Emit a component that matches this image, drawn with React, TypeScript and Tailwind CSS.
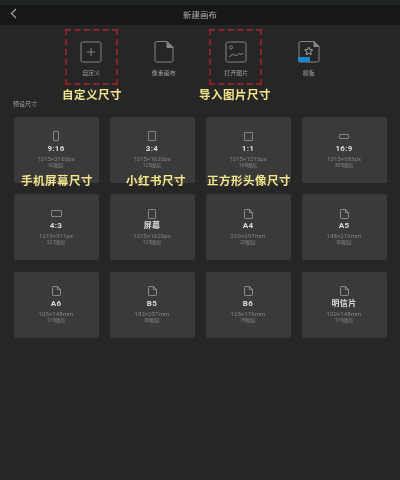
import { ReactNode } from 'react';

const FONT = "font-['Roboto','Noto_Sans_CJK_SC',sans-serif]";

type Kind = 'tall' | 'mid' | 'square' | 'wide' | 'land' | 'page';

const PRESETS: { name: string; size: string; layers: string; kind: Kind }[] = [
  { name: '9:16', size: '1215×2160px', layers: '92图层', kind: 'tall' },
  { name: '3:4', size: '1215×1620px', layers: '125图层', kind: 'mid' },
  { name: '1:1', size: '1215×1215px', layers: '169图层', kind: 'square' },
  { name: '16:9', size: '1215×683px', layers: '305图层', kind: 'wide' },
  { name: '4:3', size: '1215×911px', layers: '227图层', kind: 'land' },
  { name: '屏幕', size: '1215×1620px', layers: '125图层', kind: 'mid' },
  { name: 'A4', size: '210×297mm', layers: '23图层', kind: 'page' },
  { name: 'A5', size: '148×210mm', layers: '50图层', kind: 'page' },
  { name: 'A6', size: '105×148mm', layers: '113图层', kind: 'page' },
  { name: 'B5', size: '182×257mm', layers: '30图层', kind: 'page' },
  { name: 'B6', size: '125×176mm', layers: '78图层', kind: 'page' },
  { name: '明信片', size: '100×148mm', layers: '119图层', kind: 'page' },
];

function PresetIcon({ kind }: { kind: Kind }) {
  if (kind === 'page') {
    return (
      <svg width="9" height="10" viewBox="0 0 9 10" fill="none" stroke="#a0a0a0" strokeWidth="0.8">
        <path d="M.5 1.200A.7.7 0 0 1 1.200 .5H5.500L8.500 3.500V8.800A.7.7 0 0 1 7.800 9.500H1.200A.7.7 0 0 1 .5 8.800Z" />
        <path d="M5.500 .5V3.500H8.500" />
      </svg>
    );
  }
  const box: Record<string, string> = {
    tall: 'w-[6px] h-[10px]',
    mid: 'w-[8px] h-[10px]',
    square: 'w-[9px] h-[9px]',
    wide: 'w-[10px] h-[5px]',
    land: 'w-[11px] h-[7px]',
  };
  return <div className={`${box[kind]} border border-[#858585] rounded-[1px]`} />;
}

function PresetCard({ name, size, layers, kind }: (typeof PRESETS)[number]) {
  return (
    <div className="h-[66px] rounded-[2px] bg-[#3a3a3a] flex flex-col items-center pt-[14px]">
      <div className="h-[11px] flex items-center justify-center">
        <PresetIcon kind={kind} />
      </div>
      <div className="mt-[1px] text-[8px] leading-[12px] font-bold tracking-[0.3px] text-[#dcdcdc]">{name}</div>
      <div className="text-[6px] leading-[7px] tracking-[0.1px] text-[#858585]">{size}</div>
      <div className="text-[5px] leading-[7px] text-[#858585]">{layers}</div>
    </div>
  );
}

function Action({ label, children }: { label: string; children: ReactNode }) {
  return (
    <div className="w-[72.5px] flex flex-col items-center">
      <div className="h-[22px] flex items-center justify-center">{children}</div>
      <div className="mt-[6px] text-[6px] leading-[8px] text-[#a0a0a0]">{label}</div>
    </div>
  );
}

// yellow hand-added annotation over the screenshot
function Note({ className, children }: { className: string; children: ReactNode }) {
  return (
    <div className={`absolute text-[11.5px] leading-[14px] font-bold text-[#f3e58c] tracking-[0.5px] whitespace-nowrap ${className}`}>
      {children}
    </div>
  );
}

export default function App() {
  return (
    <div className={`relative w-[400px] h-[480px] overflow-hidden bg-[#262626] blur-[0.35px] ${FONT}`}>
      {/* Status strip + title bar */}
      <div className="h-[5px] bg-[#1f2321]" />
      <div className="relative h-[20px] bg-[#171717] flex items-center justify-center">
        <svg className="absolute left-[10px] top-[3px]" width="7" height="11" viewBox="0 0 7 11" fill="none" stroke="#a8a8a8" strokeWidth="1.2">
          <path d="M6 1L1.500 5.500L6 10" />
        </svg>
        <span className="text-[8.5px] text-[#b0b0b0]">新建画布</span>
      </div>

      {/* Create actions */}
      <div className="flex justify-center pt-[16px]">
        <Action label="自定义">
          <svg width="22" height="22" viewBox="0 0 22 22" fill="none" stroke="#858585" strokeWidth="1">
            <rect x="1" y="1" width="20" height="20" rx="1.500" />
            <path d="M11 7V15M7 11H15" />
          </svg>
        </Action>
        <Action label="像素画布">
          <svg width="20" height="22" viewBox="0 0 20 22" fill="none" stroke="#858585" strokeWidth="1">
            <path d="M1 2A1.500 1.500 0 0 1 2.500 .5H13L19 6.500V19.500A1.500 1.500 0 0 1 17.500 21H2.500A1.500 1.500 0 0 1 1 19.500Z" />
            <path d="M13 .5V6.500H19Z" fill="#858585" />
          </svg>
        </Action>
        <Action label="打开图片">
          <svg width="22" height="22" viewBox="0 0 22 22" fill="none" stroke="#858585" strokeWidth="1">
            <rect x="1" y="1" width="20" height="20" rx="1.500" />
            <circle cx="6" cy="6.500" r="1.500" />
            <path d="M4 16L8 13L11 15L14 12.500L16 13.500L18.500 12" />
          </svg>
        </Action>
        <Action label="模板">
          <svg width="22" height="22" viewBox="0 0 22 22" fill="none">
            <path d="M1 2A1.500 1.500 0 0 1 2.500 .5H16L21 5.500V19.500A1.500 1.500 0 0 1 19.500 21H2.500A1.500 1.500 0 0 1 1 19.500Z" stroke="#858585" />
            <path d="M16 .5V5.500H21Z" stroke="#858585" fill="#858585" />
            <path d="M10.700 6L11.900 8.600L14.700 8.900L12.600 10.800L13.200 13.600L10.700 12.200L8.200 13.600L8.800 10.800L6.700 8.900L9.500 8.600Z" stroke="#a8a8a8" />
            <rect x="0" y="16" width="12" height="5" fill="#1b87cf" />
          </svg>
        </Action>
      </div>

      {/* Presets */}
      <div className="pl-[13px] pt-[23px] text-[6px] leading-[8px] text-[#a0a0a0]">预设尺寸</div>
      <div className="grid grid-cols-4 gap-x-[11px] gap-y-[11.5px] px-[13.5px] pt-[8.5px]">
        {PRESETS.map(p => (
          <PresetCard key={p.name} {...p} />
        ))}
      </div>

      {/* Annotation boxes */}
      <div className="absolute left-[65px] top-[29px] w-[53px] h-[56px] border-2 border-dashed border-[#8c2328]" />
      <div className="absolute left-[209px] top-[29px] w-[53px] h-[56px] border-2 border-dashed border-[#8c2328]" />
      <Note className="left-[62px] top-[88px]">自定义尺寸</Note>
      <Note className="left-[199px] top-[88px]">导入图片尺寸</Note>
      <Note className="left-[21px] top-[174px]">手机屏幕尺寸</Note>
      <Note className="left-[126px] top-[174px]">小红书尺寸</Note>
      <Note className="left-[207px] top-[174px]">正方形头像尺寸</Note>
    </div>
  );
}
